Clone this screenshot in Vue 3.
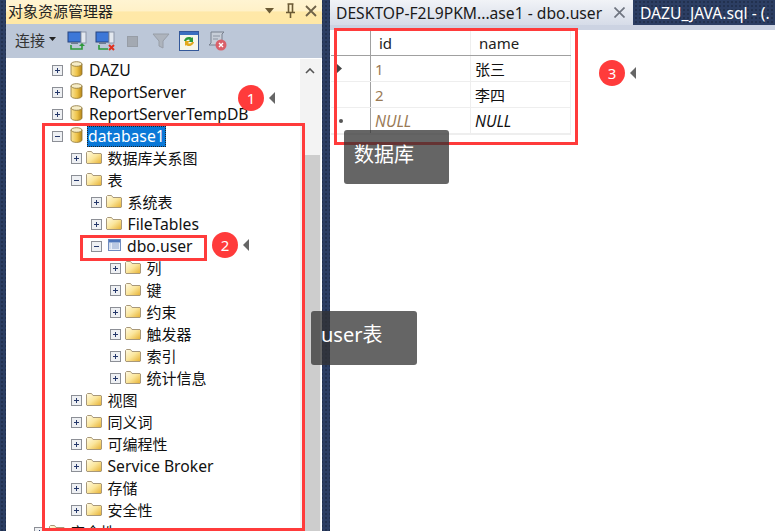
<script setup>
const base = [
  { d: 0, t: 'DAZU', i: 'db', e: '+' },
  { d: 0, t: 'ReportServer', i: 'db', e: '+' },
  { d: 0, t: 'ReportServerTempDB', i: 'db', e: '+' },
  { d: 0, t: 'database1', i: 'db', e: '-', sel: true },
  { d: 1, t: '数据库关系图', i: 'f', e: '+' },
  { d: 1, t: '表', i: 'f', e: '-' },
  { d: 2, t: '系统表', i: 'f', e: '+' },
  { d: 2, t: 'FileTables', i: 'f', e: '+' },
  { d: 2, t: 'dbo.user', i: 't', e: '-' },
  { d: 3, t: '列', i: 'f', e: '+' },
  { d: 3, t: '键', i: 'f', e: '+' },
  { d: 3, t: '约束', i: 'f', e: '+' },
  { d: 3, t: '触发器', i: 'f', e: '+' },
  { d: 3, t: '索引', i: 'f', e: '+' },
  { d: 3, t: '统计信息', i: 'f', e: '+' },
  { d: 1, t: '视图', i: 'f', e: '+' },
  { d: 1, t: '同义词', i: 'f', e: '+' },
  { d: 1, t: '可编程性', i: 'f', e: '+' },
  { d: 1, t: 'Service Broker', i: 'f', e: '+' },
  { d: 1, t: '存储', i: 'f', e: '+' },
  { d: 1, t: '安全性', i: 'f', e: '+' },
  { d: -1, t: '安全性', i: 'f', e: '+' },
]
const tree = base.map((n) => ({ ...n, latin: /[a-z]/i.test(n.t) }))
const rows = [
  { mark: 'arrow', id: '1', name: '张三' },
  { mark: '', id: '2', name: '李四' },
  { mark: 'dot', id: 'NULL', name: 'NULL', nul: true },
]
const badges = [
  { n: 1, cls: 'b1' },
  { n: 2, cls: 'b2' },
  { n: 3, cls: 'b3' },
]
</script>

<template>
  <div class="page">
    <section class="panel">
      <header class="title">
        <span class="title-text">对象资源管理器</span>
        <span class="title-btns">
          <svg width="12" height="6" viewBox="0 0 12 6"><path d="M1 0h9L5.5 5.500z" fill="#6b5a35"/></svg>
          <svg width="11" height="16" viewBox="0 0 11 16"><path d="M2.500 1h6M3.500 1v8M7.500 1v8M1 9.500h9M5.500 10v5" stroke="#6b5a35" stroke-width="1.600" fill="none"/></svg>
          <svg width="12" height="12" viewBox="0 0 12 12"><path d="M1 1l10 10M11 1L1 11" stroke="#6f6248" stroke-width="1.800"/></svg>
        </span>
      </header>
      <div class="toolbar">
        <span class="connect">连接</span>
        <svg class="caret" width="8" height="4" viewBox="0 0 8 4"><path d="M0 0h7L3.500 4z" fill="#222"/></svg>
        <svg class="tool t1" width="20" height="20" viewBox="0 0 20 20">
          <rect x="1" y="1" width="13" height="10" fill="#3d77d8" stroke="#27457f"/>
          <rect x="14" y="1" width="5" height="11" fill="#e3e8ef" stroke="#8c96a8"/>
          <rect x="4" y="11" width="7" height="2" fill="#6f7c92"/>
          <path d="M4 14v4h11v-4" stroke="#2d9a3a" stroke-width="1.600" fill="none"/>
          <path d="M12 15l3-3 3 3z" fill="#2d9a3a"/>
        </svg>
        <svg class="tool t2" width="20" height="20" viewBox="0 0 20 20">
          <rect x="1" y="1" width="13" height="10" fill="#3d77d8" stroke="#27457f"/>
          <rect x="14" y="1" width="5" height="11" fill="#e3e8ef" stroke="#8c96a8"/>
          <rect x="4" y="11" width="7" height="2" fill="#6f7c92"/>
          <path d="M4 14v4h9" stroke="#2d9a3a" stroke-width="1.600" fill="none"/>
          <path d="M14 14l5 5M19 14l-5 5" stroke="#e0301e" stroke-width="2"/>
        </svg>
        <span class="tool stop"></span>
        <svg class="tool t4" width="18" height="18" viewBox="0 0 18 18"><path d="M1 2h16l-6 7v7l-4-2V9z" fill="#aeb4bd" stroke="#989ea8"/></svg>
        <svg class="tool t5" width="20" height="20" viewBox="0 0 20 20">
          <rect x="0.500" y="0.500" width="19" height="19" fill="#f6f6ea" stroke="#33589a"/>
          <rect x="1" y="1" width="18" height="3" fill="#3b6fc0"/>
          <path d="M5 10a5 5 0 0 1 8-3l1-1v5h-5l2-2a3 3 0 0 0-4 1z" fill="#2d9a3a"/>
          <path d="M15 11a5 5 0 0 1-8 3l-1 1v-5h5l-2 2a3 3 0 0 0 4-1z" fill="#e2a81c"/>
        </svg>
        <svg class="tool t6" width="20" height="20" viewBox="0 0 20 20">
          <path d="M4 1h13l-2 2v11H2l2-2z" fill="#c7ced8" stroke="#78808e"/>
          <path d="M6 5h7M6 8h5" stroke="#8c94a2"/>
          <circle cx="14" cy="14" r="5.500" fill="#d9606a"/>
          <path d="M12 12l4 4M16 12l-4 4" stroke="#fff" stroke-width="1.400"/>
        </svg>
      </div>
      <div class="tree-wrap">
        <ul class="tree">
          <li v-for="(n, i) in tree" :key="i" class="node" :class="'d' + n.d">
            <span class="exp">
              <svg width="11" height="11" viewBox="0 0 11 11">
                <rect x="0.500" y="0.500" width="10" height="10" fill="#eef0f3" stroke="#8c8f96"/>
                <path d="M3 5.500h5" stroke="#25386b"/>
                <path v-if="n.e === '+'" d="M5.500 3v5" stroke="#25386b"/>
              </svg>
            </span>
            <svg v-if="n.i === 'db'" class="ico ico-db" width="13" height="16" viewBox="0 0 13 16">
              <defs><linearGradient id="dbg" x1="0" x2="1" y1="0" y2="0"><stop offset="0" stop-color="#f8e6a0"/><stop offset=".55" stop-color="#eec349"/><stop offset="1" stop-color="#b58415"/></linearGradient></defs>
              <path d="M1 3v10c0 1.400 2.400 2.400 5.500 2.400S12 14.400 12 13V3z" fill="url(#dbg)" stroke="#8a7236" stroke-width=".8"/>
              <ellipse cx="6.500" cy="3" rx="5.500" ry="2.300" fill="#f6edc8" stroke="#8a7236" stroke-width=".8"/>
            </svg>
            <svg v-else-if="n.i === 'f'" class="ico ico-f" width="16" height="13" viewBox="0 0 16 13">
              <defs><linearGradient id="fg" x1="0" x2="1" y1="0" y2="1"><stop offset="0" stop-color="#fffbe6"/><stop offset=".5" stop-color="#fbe69c"/><stop offset="1" stop-color="#e6b030"/></linearGradient></defs>
              <path d="M.5 12V1.500L1.500.5h4l1.500 2h8l.5.5v9l-.5.500H1z" fill="url(#fg)" stroke="#a8987a"/>
            </svg>
            <svg v-else class="ico ico-t" width="13" height="12" viewBox="0 0 13 12">
              <rect x=".5" y=".5" width="12" height="11" fill="#e9eef7" stroke="#6f8cc0"/>
              <rect x="1" y="1" width="11" height="2.500" fill="#4f76bb"/>
              <path d="M4 5h7M4 7h7M4 9h7M1.500 5h1M1.500 7h1M1.500 9h1" stroke="#8ba2cc"/>
            </svg>
            <span class="label" :class="{ sel: n.sel, latin: n.latin }">{{ n.t }}</span>
          </li>
        </ul>
        <div class="scrollbar">
          <svg class="up" width="10" height="6" viewBox="0 0 10 6"><path d="M1 5l4-4 4 4" stroke="#555" stroke-width="1.600" fill="none"/></svg>
          <div class="thumb"></div>
        </div>
      </div>
    </section>

    <section class="main">
      <div class="tabs">
        <div class="tab active">
          <span>DESKTOP-F2L9PKM...ase1 - dbo.user</span>
          <svg width="11" height="11" viewBox="0 0 11 11"><path d="M.5.5l10 10M10.500.5l-10 10" stroke="#6f7580" stroke-width="1.700"/></svg>
        </div>
        <div class="tab other">DAZU_JAVA.sql - (.</div>
      </div>
      <div class="band"></div>
      <div class="grid">
        <div class="hrow">
          <div class="c0"></div>
          <div class="c1 hcell">id</div>
          <div class="c2 hcell">name</div>
        </div>
        <div v-for="(r, i) in rows" :key="i" class="row">
          <div class="c0">
            <svg v-if="r.mark === 'arrow'" width="5" height="9" viewBox="0 0 5 9"><path d="M0 0l5 4.500L0 9z" fill="#444"/></svg>
            <span v-else-if="r.mark === 'dot'" class="dot"></span>
          </div>
          <div class="c1 val" :class="{ nul: r.nul }">{{ r.id }}</div>
          <div class="c2 val2" :class="{ nul: r.nul }">{{ r.name }}</div>
        </div>
      </div>
    </section>

    <div class="redbox r1"></div>
    <div class="redbox r2"></div>
    <div class="redbox r3"></div>

    <div v-for="b in badges" :key="b.n" class="badge" :class="b.cls">
      <span class="num">{{ b.n }}</span>
      <span class="tri"></span>
    </div>

    <div class="tip tip1">数据库</div>
    <div class="tip tip2">user表</div>
  </div>
</template>

<style>
html, body { margin: 0; overflow: hidden; background: #fff; }
</style>

<style scoped>
.page {
  position: relative;
  width: 775px;
  height: 531px;
  overflow: hidden;
  display: flex;
  background-color: #2c3e63;
  background-image: radial-gradient(#22314f 1px, transparent 1px);
  background-size: 4px 4px;
  padding-left: 6px;
  box-sizing: border-box;
  font-family: "Noto Sans", "Noto Sans CJK SC", sans-serif;
  font-size: 15px;
  color: #111;
}
.panel {
  width: 316px;
  height: 531px;
  display: flex;
  flex-direction: column;
  flex: none;
}
.title {
  height: 24px;
  flex: none;
  display: flex;
  align-items: center;
  justify-content: space-between;
  padding: 0 5px 3px 2px;
  box-sizing: border-box;
  background: linear-gradient(#fff4d2 0, #fff1c8 45%, #ffe8a8 50%, #ffe8a6 100%);
}
.title-text { font-size: 15px; color: #222; }
.title-btns { display: flex; align-items: center; gap: 9px; }
.toolbar {
  height: 34px;
  flex: none;
  background: #bcc7d8;
  display: flex;
  align-items: center;
  padding-left: 9px;
  position: relative;
}
.connect { font-size: 15px; color: #333; position: relative; top: -2px; }
.caret { margin-left: 4px; position: relative; top: -2px; }
.tool { flex: none; }
.t1 { margin-left: 10px; }
.t2 { margin-left: 8px; }
.stop {
  width: 11px;
  height: 11px;
  margin-left: 12px;
  background: #a3a9b2;
  border: 1px solid #979da6;
  box-sizing: border-box;
}
.t4 { margin-left: 14px; }
.t5 { margin-left: 9px; }
.t6 { margin-left: 8px; }
.tree-wrap {
  flex: 1;
  min-height: 0;
  display: flex;
  background: #fff;
  overflow: hidden;
  padding-right: 1px;
  padding-top: 1px;
}
.tree {
  list-style: none;
  margin: 0;
  padding: 0;
  flex: 1;
  min-width: 0;
}
.node {
  height: 22px;
  display: flex;
  align-items: center;
  white-space: nowrap;
}
.d-1 { padding-left: 28px; }
.d0 { padding-left: 46px; }
.d1 { padding-left: 65px; }
.d2 { padding-left: 85px; }
.d3 { padding-left: 104px; }
.exp { width: 11px; height: 11px; display: flex; flex: none; }
.ico { flex: none; position: relative; top: -1px; }
.ico-f { margin-left: 4px; margin-right: 4.500px; }
.ico-db { margin-left: 7px; margin-right: 5px; }
.ico-t { margin-left: 6px; margin-right: 5px; }
.label { line-height: 21px; padding: 0 1px; }
.label.latin { font-size: 15.7px; }
.label.sel {
  background: #0a78d7;
  color: #fff;
  outline: 1px dotted #222;
  outline-offset: -1px;
  margin-left: -1px;
  padding: 0 1px;
}
.scrollbar {
  width: 21px;
  flex: none;
  background: #f3f3f3;
  position: relative;
}
.up { position: absolute; left: 5px; top: 9px; }
.thumb {
  position: absolute;
  left: 5px;
  right: 1px;
  top: 96px;
  bottom: 0;
  background: #cdcdcd;
}
.main {
  margin-left: 8px;
  flex: 1;
  min-width: 0;
  display: flex;
  flex-direction: column;
  background: #fff;
  position: relative;
}
.tabs {
  height: 25px;
  flex: none;
  display: flex;
  background-color: #2c3e63;
  background-image: radial-gradient(#22314f 1px, transparent 1px);
  background-size: 4px 4px;
}
.tab { white-space: nowrap; display: flex; align-items: center; font-size: 15.65px; }
.tab.active {
  width: 303px;
  flex: none;
  box-sizing: border-box;
  padding: 0 8px 0 6px;
  justify-content: space-between;
  background: linear-gradient(#f1f3f7, #d6dce8);
  color: #1a1a1a;
}
.tab.other {
  padding-left: 7px;
  color: #fff;
}
.band { height: 5px; flex: none; background: #ccd3e2; }
.grid {
  width: 240px;
  margin-left: 1px;
  position: relative;
  border-bottom: 1px solid #eee;
}
.hrow, .row { display: flex; box-sizing: border-box; }
.hrow { height: 26px; border-bottom: 1px solid #a0a0a0; }
.row { height: 26px; border-bottom: 1px solid #eee; }
.c0 {
  width: 40px;
  flex: none;
  border-right: 1px solid #a0a0a0;
  display: flex;
  align-items: center;
  position: relative;
  padding-left: 6px;
  box-sizing: border-box;
}
.c1 { width: 100px; flex: none; border-right: 1px solid #eee; box-sizing: border-box; }
.c2 { flex: 1; border-right: 1px solid #eee; }
.hcell { padding-left: 8px; line-height: 26px; color: #222; }
.val { padding-left: 4px; line-height: 27px; color: #9a7a55; }
.val2 { padding-left: 4px; line-height: 27px; color: #111; }
.val.nul, .val2.nul { font-style: italic; font-size: 15.5px; }
.dot { width: 4px; height: 4px; margin-left: 2px; border-radius: 50%; background: #555; }
.redbox {
  position: absolute;
  box-sizing: border-box;
  border: 3px solid #ff3b3b;
  pointer-events: none;
}
.r1 { left: 42px; top: 123px; width: 263px; height: 408px; }
.r2 { left: 80px; top: 235px; width: 127px; height: 26px; }
.r3 { left: 334px; top: 28px; width: 244px; height: 117px; }
.badge {
  position: absolute;
  width: 26px;
  height: 26px;
  border-radius: 50%;
  background: #ff3b3b;
  color: #fff;
  font-size: 15px;
  display: flex;
  align-items: center;
  justify-content: center;
}
.tri {
  position: absolute;
  left: 31px;
  top: 7px;
  width: 0;
  height: 0;
  border-top: 6px solid transparent;
  border-bottom: 6px solid transparent;
  border-right: 6px solid #666;
}
.b1 { left: 238px; top: 85px; }
.b2 { left: 212px; top: 232px; }
.b3 { left: 599px; top: 60px; }
.tip {
  position: absolute;
  box-sizing: border-box;
  background: rgba(50, 50, 50, 0.75);
  border-radius: 3px;
  color: #fff;
  font-size: 20px;
  padding: 9px 10px;
  line-height: 30px;
  height: 54px;
}
.tip1 { left: 344px; top: 130px; width: 105px; padding-top: 10px; }
.tip2 { left: 311px; top: 311px; width: 106px; }
</style>
